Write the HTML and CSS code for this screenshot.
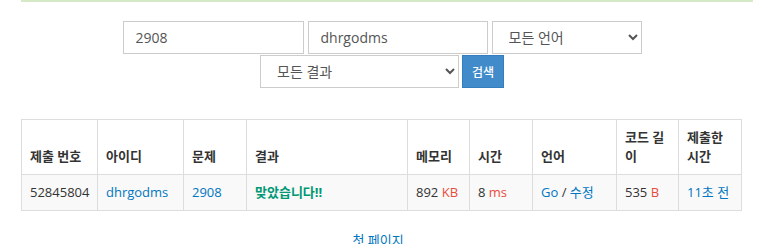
FILE: index.html
```html
<!DOCTYPE html>
<html lang="ko">

<head>
  <meta charset="UTF-8" />
  <meta name="viewport" content="width=device-width, initial-scale=1.0" />
  <title>채점 현황</title>
  <link rel="stylesheet" href="styles.css">
</head>

<body>
  <div class="topline"></div>
  <div class="wrap">
    <form class="search" onsubmit="return false">
      <div class="row">
        <input class="field w-problem" type="text" name="problem_id" value="2908">
        <input class="field w-user" type="text" name="user_id" value="dhrgodms">
        <select class="field w-lang" name="language_id">
          <option>모든 언어</option>
        </select>
      </div>
      <div class="row">
        <select class="field w-result" name="result_id">
          <option>모든 결과</option>
        </select>
        <button class="btn" type="submit">검색</button>
      </div>
    </form>

    <table class="status">
      <thead>
        <tr>
          <th class="c-id">제출 번호</th>
          <th class="c-user">아이디</th>
          <th class="c-prob">문제</th>
          <th class="c-res">결과</th>
          <th class="c-mem">메모리</th>
          <th class="c-time">시간</th>
          <th class="c-lang">언어</th>
          <th class="c-len">코드 길이</th>
          <th class="c-date">제출한 시간</th>
        </tr>
      </thead>
      <tbody>
        <tr>
          <td>52845804</td>
          <td><a href="#">dhrgodms</a></td>
          <td><a href="#">2908</a></td>
          <td><span class="ac">맞았습니다!!</span></td>
          <td>892 <span class="unit">KB</span></td>
          <td>8 <span class="unit">ms</span></td>
          <td><a href="#">Go</a> / <a href="#">수정</a></td>
          <td>535 <span class="unit">B</span></td>
          <td><a href="#">11초 전</a></td>
        </tr>
      </tbody>
    </table>

    <div class="pager">
      <a href="#">첫 페이지</a>
    </div>
  </div>
</body>

</html>
```

FILE: styles.css
```css
* {
  box-sizing: border-box;
  margin: 0;
  padding: 0;
}

body {
  font-family: 'Open Sans', 'Noto Sans CJK KR', sans-serif;
  font-size: 13px;
  line-height: 19px;
  color: #333;
  background: #fff;
}

a {
  color: #0076c0;
  text-decoration: none;
}

.topline {
  margin-left: 21px;
  width: 732px;
  height: 2px;
  background: #d6e9c6;
}

.wrap {
  margin-left: 21px;
  width: 720px;
}

.search {
  margin-top: 19px;
  padding-left: 2px;
  display: flex;
  flex-direction: column;
  gap: 1px;
}

.row {
  display: flex;
  justify-content: center;
  gap: 4px;
}

.field {
  height: 33px;
  padding: 0 12px;
  border: 1px solid #ccc;
  background: #fff;
  color: #555;
  font-family: 'Open Sans', 'Noto Sans CJK KR', sans-serif;
  font-size: 14px;
  border-radius: 0;
  outline: none;
}

.w-problem { width: 181px; }
.w-user { width: 180px; }
.w-lang { width: 150px; }
.w-result { width: 199px; }

.btn {
  height: 33px;
  width: 42px;
  margin-left: -1px;
  border: 1px solid #357ebd;
  background: #428bca;
  color: #fff;
  font-family: 'Noto Sans CJK KR', sans-serif;
  font-size: 12px;
  font-weight: 500;
  cursor: pointer;
}

.status {
  margin-top: 31px;
  width: 720px;
  table-layout: fixed;
  border-collapse: collapse;
}

.status th,
.status td {
  border: 1px solid #ddd;
  padding: 8px;
  text-align: left;
}

.status th {
  vertical-align: bottom;
  font-weight: 700;
  background: #fff;
}

.status td {
  background: #f9f9f9;
  vertical-align: top;
}

.c-id { width: 76px; }
.c-user { width: 86px; }
.c-prob { width: 63px; }
.c-res { width: 161px; }
.c-mem { width: 62px; }
.c-time { width: 63px; }
.c-lang { width: 84px; }
.c-len { width: 62px; }
.c-date { width: 63px; }

.ac {
  color: #009874;
  font-weight: 700;
}

.unit {
  color: #e74c3c;
}

.pager {
  margin-top: 20px;
  text-align: center;
  padding-right: 6px;
}
```
